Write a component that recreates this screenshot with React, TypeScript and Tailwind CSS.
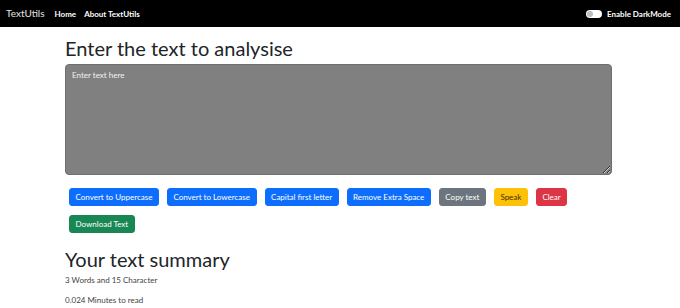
import React from 'react'

const buttons = [
  { label: 'Convert to Uppercase', cls: 'bg-[#0d6efd] border-[#0d6efd] text-white' },
  { label: 'Convert to Lowercase', cls: 'bg-[#0d6efd] border-[#0d6efd] text-white' },
  { label: 'Capital first letter', cls: 'bg-[#0d6efd] border-[#0d6efd] text-white' },
  { label: 'Remove Extra Space', cls: 'bg-[#0d6efd] border-[#0d6efd] text-white' },
  { label: 'Copy text', cls: 'bg-[#6c757d] border-[#6c757d] text-white' },
  { label: 'Speak', cls: 'bg-[#ffc107] border-[#ffc107] text-[#3b3000]' },
  { label: 'Clear', cls: 'bg-[#dc3545] border-[#dc3545] text-white' },
  { label: 'Download Text', cls: 'bg-[#198754] border-[#198754] text-white' },
]

export default function App() {
  return (
    <div className="min-h-[308px] bg-white font-['Lato','Noto_Sans',sans-serif] text-[#212529]">
      {/* navbar */}
      <nav className="h-[27px] bg-black flex items-center pl-[6px] pr-[9px]">
        <span className="text-[10px] text-white/90 mr-[10px]">TextUtils</span>
        <ul className="flex items-center gap-[8px] text-[8px] font-bold text-white">
          <li>Home</li>
          <li>About TextUtils</li>
        </ul>
        <div className="ml-auto flex items-center gap-[5px]">
          <div className="w-[16px] h-[8px] rounded-full bg-white flex items-center px-[1px]">
            <div className="w-[6px] h-[6px] rounded-full bg-[#bfbfbf]" />
          </div>
          <span className="text-[8px] font-bold text-white">Enable DarkMode</span>
        </div>
      </nav>

      {/* main */}
      <div className="ml-[65px] w-[547px]">
        <h1 className="mt-[9px] text-[20px] leading-[25px] font-normal">Enter the text to analysise</h1>
        <textarea
          className="mt-[3px] block w-full h-[111px] rounded-[4px] border border-[#6e6e6e] bg-[#808080] px-[6px] py-[4px] text-[8px] text-white placeholder:text-white/90 outline-none"
          placeholder="Enter text here"
        />
        <div className="mt-[13px] flex flex-wrap gap-y-[9px]">
          {buttons.map((b) => (
            <button
              key={b.label}
              className={`mx-[4px] h-[18px] px-[5.5px] rounded-[3px] border text-[8px] leading-none ${b.cls}`}
            >
              {b.label}
            </button>
          ))}
        </div>

        <h2 className="mt-[14px] text-[20px] leading-[25px] font-normal">Your text summary</h2>
        <p className="mt-[2px] text-[8px] leading-[12px] text-[#444]">3 Words and 15 Character</p>
        <p className="mt-[8px] text-[8px] leading-[12px] text-[#444]">0.024 Minutes to read</p>
      </div>
    </div>
  )
}
